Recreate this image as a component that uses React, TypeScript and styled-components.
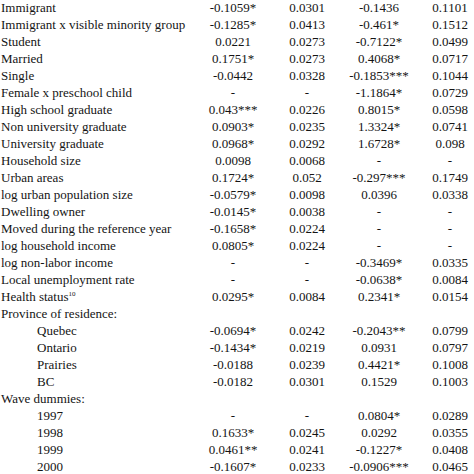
import React from "react";
import styled, { createGlobalStyle } from "styled-components";

const Global = createGlobalStyle`
  html, body { margin: 0; padding: 0; background: #fff; }
  body { overflow: hidden; }
`;

const Table = styled.div`
  display: grid;
  grid-template-columns: 200px 66px 82px 62px 80px;
  width: 490px;
  margin-top: -1px;
  font-family: "Liberation Serif", "Times New Roman", serif;
  font-size: 13px;
  line-height: 17px;
  color: #141414;
`;

const Label = styled.div<{ $indent?: boolean }>`
  padding-left: ${(p) => (p.$indent ? "37px" : "1px")};
  white-space: nowrap;
`;

const Cell = styled.div`
  text-align: center;
  white-space: nowrap;
`;

const Sup = styled.sup`
  font-size: 7px;
  line-height: 0;
  vertical-align: 5px;
`;

type Row = { label: React.ReactNode; indent?: boolean; v?: [string, string, string, string] };

const rows: Row[] = [
  { label: "Immigrant", v: ["-0.1059*", "0.0301", "-0.1436", "0.1101"] },
  { label: "Immigrant x visible minority group", v: ["-0.1285*", "0.0413", "-0.461*", "0.1512"] },
  { label: "Student", v: ["0.0221", "0.0273", "-0.7122*", "0.0499"] },
  { label: "Married", v: ["0.1751*", "0.0273", "0.4068*", "0.0717"] },
  { label: "Single", v: ["-0.0442", "0.0328", "-0.1853***", "0.1044"] },
  { label: "Female x preschool child", v: ["-", "-", "-1.1864*", "0.0729"] },
  { label: "High school graduate", v: ["0.043***", "0.0226", "0.8015*", "0.0598"] },
  { label: "Non university graduate", v: ["0.0903*", "0.0235", "1.3324*", "0.0741"] },
  { label: "University graduate", v: ["0.0968*", "0.0292", "1.6728*", "0.098"] },
  { label: "Household size", v: ["0.0098", "0.0068", "-", "-"] },
  { label: "Urban areas", v: ["0.1724*", "0.052", "-0.297***", "0.1749"] },
  { label: "log urban population size", v: ["-0.0579*", "0.0098", "0.0396", "0.0338"] },
  { label: "Dwelling owner", v: ["-0.0145*", "0.0038", "-", "-"] },
  { label: "Moved during the reference year", v: ["-0.1658*", "0.0224", "-", "-"] },
  { label: "log household income", v: ["0.0805*", "0.0224", "-", "-"] },
  { label: "log non-labor income", v: ["-", "-", "-0.3469*", "0.0335"] },
  { label: "Local unemployment rate", v: ["-", "-", "-0.0638*", "0.0084"] },
  {
    label: (
      <>
        Health status<Sup>10</Sup>
      </>
    ),
    v: ["0.0295*", "0.0084", "0.2341*", "0.0154"],
  },
  { label: "Province of residence:" },
  { label: "Quebec", indent: true, v: ["-0.0694*", "0.0242", "-0.2043**", "0.0799"] },
  { label: "Ontario", indent: true, v: ["-0.1434*", "0.0219", "0.0931", "0.0797"] },
  { label: "Prairies", indent: true, v: ["-0.0188", "0.0239", "0.4421*", "0.1008"] },
  { label: "BC", indent: true, v: ["-0.0182", "0.0301", "0.1529", "0.1003"] },
  { label: "Wave dummies:" },
  { label: "1997", indent: true, v: ["-", "-", "0.0804*", "0.0289"] },
  { label: "1998", indent: true, v: ["0.1633*", "0.0245", "0.0292", "0.0355"] },
  { label: "1999", indent: true, v: ["0.0461**", "0.0241", "-0.1227*", "0.0408"] },
  { label: "2000", indent: true, v: ["-0.1607*", "0.0233", "-0.0906***", "0.0465"] },
];

export default function App() {
  return (
    <>
      <Global />
      <Table>
        {rows.map((r, i) => (
          <React.Fragment key={i}>
            <Label $indent={r.indent}>{r.label}</Label>
            {(r.v ?? ["", "", "", ""]).map((c, j) => (
              <Cell key={j}>{c}</Cell>
            ))}
          </React.Fragment>
        ))}
      </Table>
    </>
  );
}
